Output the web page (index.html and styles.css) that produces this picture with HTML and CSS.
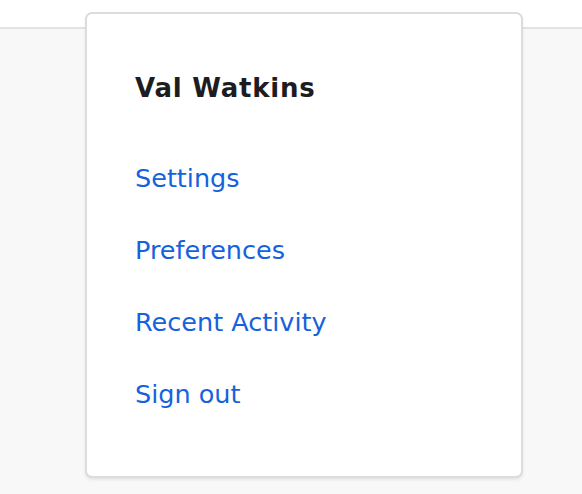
FILE: index.html
```html
<!DOCTYPE html>
<html>
<head>
<meta charset="utf-8">
<link rel="stylesheet" href="styles.css">
</head>
<body>
<div class="topbar"></div>
<div class="content"></div>
<div class="menu">
  <div class="name">Val Watkins</div>
  <nav class="links">
    <a class="link" href="#">Settings</a>
    <a class="link" href="#">Preferences</a>
    <a class="link" href="#">Recent Activity</a>
    <a class="link" href="#">Sign out</a>
  </nav>
</div>
</body>
</html>
```
FILE: styles.css
```css
html, body {
  margin: 0;
  padding: 0;
  height: 100%;
}
body {
  background: #ffffff;
  font-family: "DejaVu Sans", sans-serif;
  position: relative;
  overflow: hidden;
}
.topbar {
  height: 27px;
  background: #ffffff;
}
.content {
  border-top: 2px solid #e2e2e4;
  background: #f8f8f8;
  height: calc(100% - 29px);
}
.menu {
  position: absolute;
  left: 85px;
  top: 12px;
  width: 434px;
  height: 462px;
  box-sizing: content-box;
  background: #ffffff;
  border: 2px solid #dcdce0;
  border-radius: 7px;
  box-shadow: 0 2px 3px rgba(0, 0, 0, 0.08);
  padding: 0;
}
.name {
  margin: 58px 0 0 48px;
  font-size: 26px;
  line-height: 32px;
  font-weight: 700;
  color: #1d1d21;
  letter-spacing: 0.75px;
}
.links {
  display: flex;
  flex-direction: column;
  margin: 58px 0 0 48px;
  gap: 40px;
}
.link {
  font-size: 25.5px;
  line-height: 32px;
  color: #1662dd;
  text-decoration: none;
}
```
